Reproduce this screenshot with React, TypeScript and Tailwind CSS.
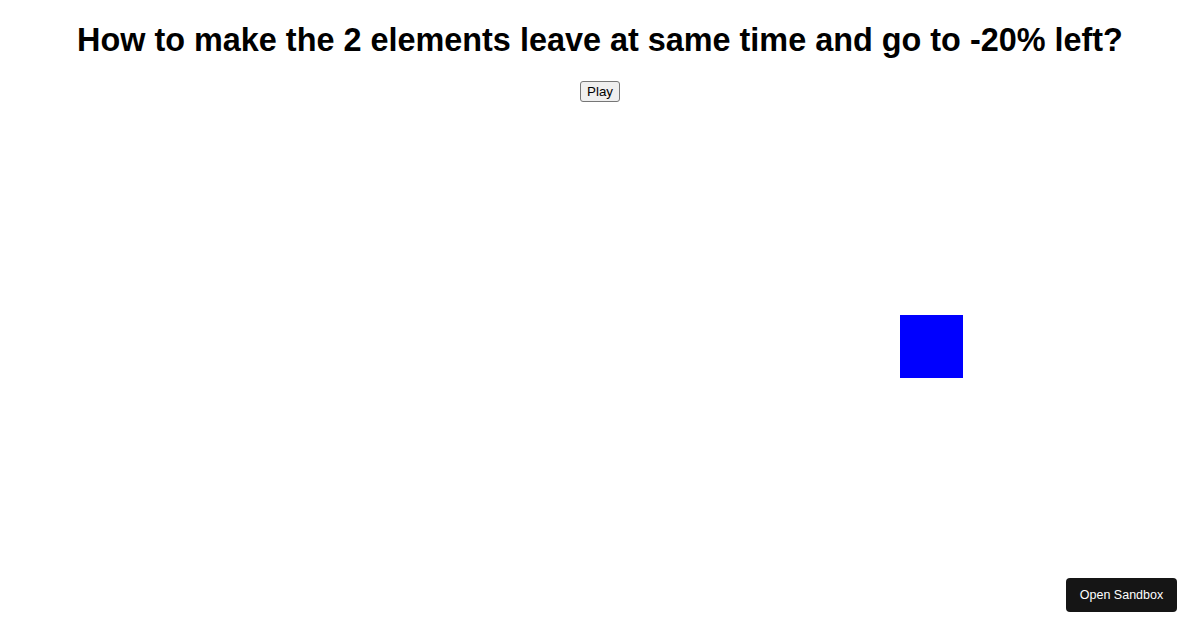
export default function App() {
  return (
    <div className="relative w-[1200px] h-[630px] bg-white overflow-hidden" style={{ fontFamily: '"Liberation Sans", Arial, sans-serif' }}>
      <div className="flex flex-col items-center">
        <h1 className="mt-[22px] text-[32.4px] leading-[37px] font-bold text-black whitespace-nowrap">How to make the 2 elements leave at same time and go to -20% left?</h1>
        <button className="mt-[22px] h-[21px] px-[6.5px] text-[13.33px] leading-[15px] text-black bg-[#efefef] border border-[#767676] rounded-[3px]">Play</button>
      </div>
      <div className="flex pl-[900px] pt-[213px]">
        <div className="w-[63px] h-[63px] bg-[#0000ff]"></div>
      </div>
      <div className="absolute right-[23px] bottom-[18px] h-[34px] w-[111px] flex items-center justify-center rounded-[4px] bg-[#151515] text-white text-[12.5px]">Open Sandbox</div>
    </div>
  );
}
